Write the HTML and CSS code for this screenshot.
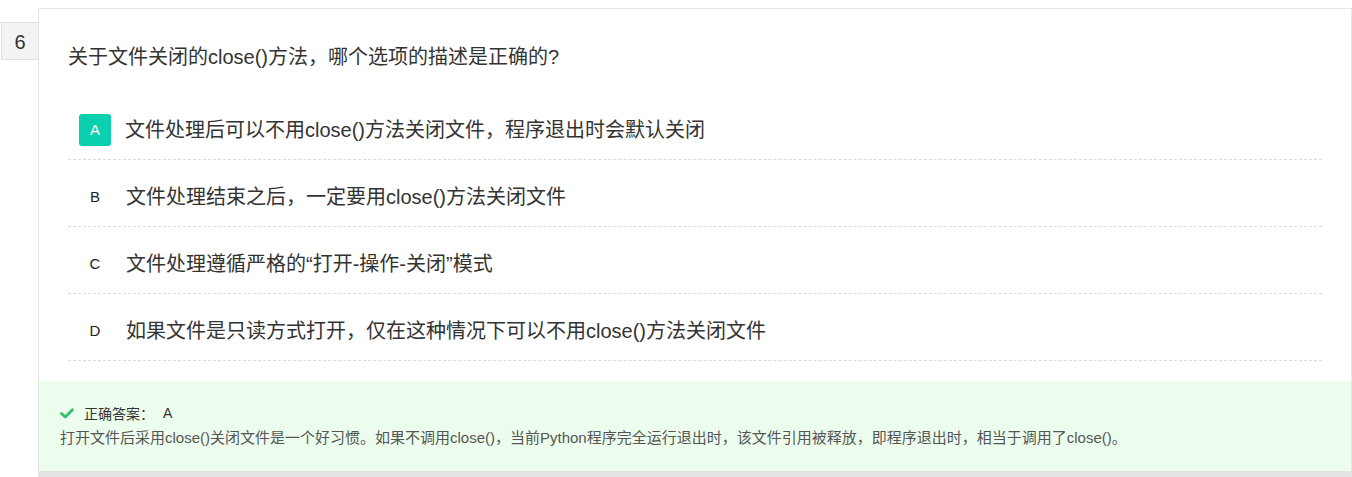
FILE: index.html
```html
<!DOCTYPE html>
<html lang="zh">
<head>
<meta charset="utf-8">
<link rel="stylesheet" href="styles.css">
</head>
<body>
<div class="wrap">
  <div class="qnum">6</div>
  <div class="card">
    <div class="question">关于文件关闭的close()方法，哪个选项的描述是正确的?</div>
    <ul class="options">
      <li class="opt"><span class="letter active">A</span><span class="otext">文件处理后可以不用close()方法关闭文件，程序退出时会默认关闭</span></li>
      <li class="opt"><span class="letter">B</span><span class="otext">文件处理结束之后，一定要用close()方法关闭文件</span></li>
      <li class="opt"><span class="letter">C</span><span class="otext">文件处理遵循严格的“打开-操作-关闭”模式</span></li>
      <li class="opt"><span class="letter">D</span><span class="otext">如果文件是只读方式打开，仅在这种情况下可以不用close()方法关闭文件</span></li>
    </ul>
    <div class="answer">
      <div class="ans-line">
        <svg class="check" width="14" height="11" viewBox="0 0 14 11"><path d="M1.5 5.5 L5.2 9 L12.5 1.8" fill="none" stroke="#2dc46c" stroke-width="2.8" stroke-linecap="round" stroke-linejoin="round"/></svg>
        <span class="ans-label">正确答案：</span><span class="ans-val">A</span>
      </div>
      <div class="explain">打开文件后采用close()关闭文件是一个好习惯。如果不调用close()，当前Python程序完全运行退出时，该文件引用被释放，即程序退出时，相当于调用了close()。</div>
    </div>
  </div>
</div>
</body>
</html>
```

FILE: styles.css
```css
html, body {
  margin: 0;
  padding: 0;
  background: #fff;
}
body {
  font-family: "Liberation Sans", "Noto Sans CJK SC", sans-serif;
  color: #333;
}
.wrap {
  display: flex;
  align-items: flex-start;
  padding-top: 8px;
}
.qnum {
  margin-top: 14px;
  margin-left: 1px;
  width: 36px;
  height: 36px;
  border: 1px solid #e0e0e0;
  border-right: none;
  background: #f3f3f3;
  font-size: 20px;
  line-height: 38px;
  text-align: center;
  color: #333;
}
.card {
  flex: 1;
  border: 1px solid #e6e6e6;
  border-bottom: none;
  min-height: 468px;
  display: flex;
  flex-direction: column;
}
.question {
  padding: 35px 29px 0;
  font-size: 20px;
  line-height: 26px;
  color: #333;
}
.options {
  list-style: none;
  margin: 23px 29px 0;
  padding: 0;
}
.opt {
  display: flex;
  align-items: center;
  padding: 21px 0 13px;
  border-bottom: 1px dashed #dcdcdc;
}
.letter {
  width: 32px;
  height: 32px;
  margin-left: 11px;
  margin-right: 15px;
  border-radius: 3px;
  font-size: 15px;
  line-height: 32px;
  text-align: center;
  color: #222;
  flex: none;
}
.letter.active {
  background: #0bd0b0;
  color: #fff;
  margin-right: 14px;
}
.otext {
  font-size: 20px;
  line-height: 26px;
  color: #333;
}
.answer {
  margin-top: 20px;
  background: #edfded;
  padding: 22px 21px 22px;
  border-bottom: 7px solid #e3e3e3;
  flex: 1;
}
.ans-line {
  display: flex;
  align-items: center;
  height: 20px;
  font-size: 14px;
  color: #333;
}
.check {
  margin-right: 10px;
}
.ans-label {
  margin-right: 9px;
}
.explain {
  margin-top: 4px;
  font-size: 15px;
  line-height: 22px;
  color: #555;
}
```
